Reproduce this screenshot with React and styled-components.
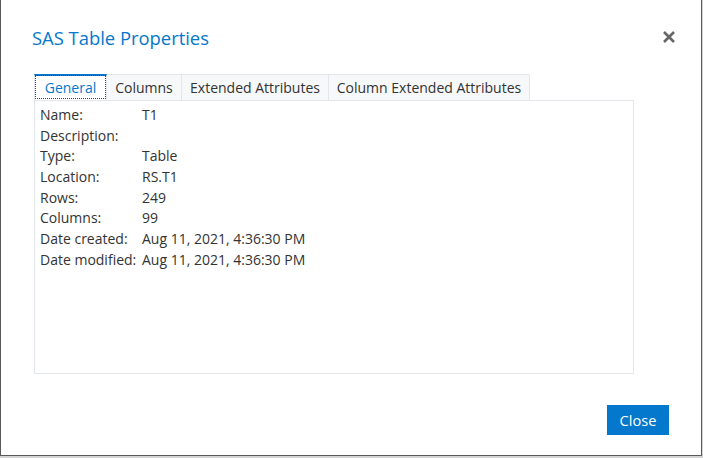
import React from 'react'
import { styled, createGlobalStyle } from 'styled-components'

const GlobalStyle = createGlobalStyle`
  html, body {
    margin: 0;
    padding: 0;
    background: #d4d4d4;
    font-family: "Open Sans", Lato, sans-serif;
  }
`;

const Dialog = styled.div`
  width: 700px;
  height: 455px;
  background: #fff;
  border: 1px solid #5a5a5a;
  border-top: none;
  display: flex;
  flex-direction: column;
`;

const Header = styled.div`
  height: 74px;
  padding: 0 24px 0 31px;
  display: flex;
  align-items: flex-start;
  justify-content: space-between;
`;

const Title = styled.h1`
  margin: 25px 0 0;
  font-size: 18.4px;
  line-height: 25px;
  font-weight: 400;
  color: #0378cd;
`;

const CloseX = styled.button`
  margin-top: 30px;
  padding: 0;
  border: none;
  background: none;
  width: 16px;
  height: 16px;
  cursor: pointer;
`;

const Body = styled.div`
  padding: 0 0 0 33px;
  flex: 1;
`;

const TabBar = styled.div`
  display: flex;
  height: 26px;
`;

const Tab = styled.div`
  box-sizing: border-box;
  width: ${p => p.w}px;
  height: 26px;
  padding-top: ${p => (p.active ? '2px' : '3px')};
  text-align: center;
  font-size: 14px;
  line-height: 19px;
  color: ${p => (p.active ? '#0378cd' : '#333')};
  background: ${p => (p.active ? '#fff' : '#f7f8f9')};
  border: 1px solid #e3e6ea;
  border-left: ${p => (p.first ? '1px solid #e3e6ea' : 'none')};
  border-top: ${p => (p.active ? '2px solid #0378cd' : '1px solid #e3e6ea')};
  border-bottom: none;
  outline: ${p => (p.active ? '1px dotted #0a4f8a' : 'none')};
  outline-offset: -2px;
`;

const Panel = styled.div`
  box-sizing: border-box;
  width: 600px;
  height: 274px;
  border: 1px solid #e3e6ea;
  padding: 4px 0 0 5px;
`;

const Row = styled.div`
  display: flex;
  height: 20.7px;
  font-size: 14px;
  line-height: 19px;
  color: #333;
`;

const Label = styled.span`
  width: 102px;
  white-space: nowrap;
`;

const Value = styled.span`
  white-space: nowrap;
`;

const Footer = styled.div`
  display: flex;
  justify-content: flex-end;
  padding: 0 32px 20px 0;
`;

const Button = styled.button`
  width: 62px;
  height: 30px;
  border: none;
  background: #0378cd;
  color: #fff;
  font-family: "Open Sans", Lato, sans-serif;
  font-size: 14.6px;
  padding: 0;
  cursor: pointer;
`;

const tabs = [
  { name: 'General', w: 73 },
  { name: 'Columns', w: 75 },
  { name: 'Extended Attributes', w: 147 },
  { name: 'Column Extended Attributes', w: 201 },
];

const props = [
  ['Name:', 'T1'],
  ['Description:', ''],
  ['Type:', 'Table'],
  ['Location:', 'RS.T1'],
  ['Rows:', '249'],
  ['Columns:', '99'],
  ['Date created:', 'Aug 11, 2021, 4:36:30 PM'],
  ['Date modified:', 'Aug 11, 2021, 4:36:30 PM'],
];

export default function App() {
  return (
    <>
      <GlobalStyle />
      <Dialog>
        <Header>
          <Title>SAS Table Properties</Title>
          <CloseX aria-label="Close">
            <svg width="14" height="14" viewBox="0 0 14 14">
              <path d="M2 2L12 12M12 2L2 12" stroke="#666" strokeWidth="2.6" />
            </svg>
          </CloseX>
        </Header>
        <Body>
          <TabBar>
            {tabs.map((t, i) => (
              <Tab key={t.name} w={t.w} first={i === 0} active={i === 0}>
                {t.name}
              </Tab>
            ))}
          </TabBar>
          <Panel>
            {props.map(([k, v]) => (
              <Row key={k}>
                <Label>{k}</Label>
                <Value>{v}</Value>
              </Row>
            ))}
          </Panel>
        </Body>
        <Footer>
          <Button>Close</Button>
        </Footer>
      </Dialog>
    </>
  )
}
